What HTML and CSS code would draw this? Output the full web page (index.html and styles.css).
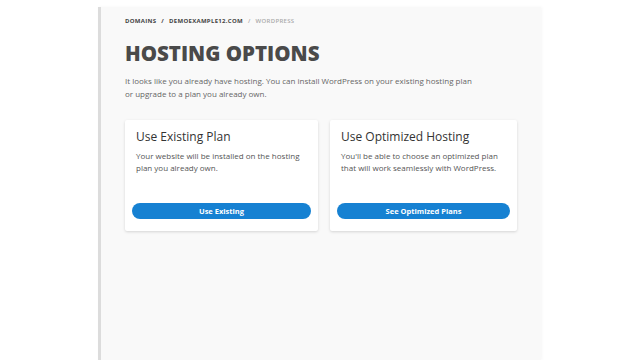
FILE: index.html
```html
<!DOCTYPE html>
<html>
<head>
<meta charset="utf-8">
<link rel="stylesheet" href="styles.css">
</head>
<body>
<div class="page">
  <div class="panel">
    <nav class="crumbs">
      <span class="crumb">DOMAINS</span>
      <span class="sep">/</span>
      <span class="crumb">DEMOEXAMPLE12.COM</span>
      <span class="sep light">/</span>
      <span class="crumb light">WORDPRESS</span>
    </nav>
    <h1 class="title">HOSTING OPTIONS</h1>
    <p class="intro">It looks like you already have hosting. You can install WordPress on your existing hosting plan<br>or upgrade to a plan you already own.</p>
    <div class="cards">
      <div class="card card-a">
        <h2 class="card-title">Use Existing Plan</h2>
        <p class="card-text">Your website will be installed on the hosting<br>plan you already own.</p>
        <button class="btn">Use Existing</button>
      </div>
      <div class="card card-b">
        <h2 class="card-title">Use Optimized Hosting</h2>
        <p class="card-text">You'll be able to choose an optimized plan<br>that will work seamlessly with WordPress.</p>
        <button class="btn">See Optimized Plans</button>
      </div>
    </div>
  </div>
</div>
</body>
</html>
```
FILE: styles.css
```css
html, body {
  margin: 0;
  padding: 0;
  background: #ffffff;
  width: 640px;
  height: 360px;
  overflow: hidden;
  font-family: "Open Sans", "Liberation Sans", sans-serif;
}
.page {
  padding: 7px 0 0 98px;
  height: 353px;
}
.panel {
  width: 443px;
  height: 353px;
  box-sizing: border-box;
  background: #f9f9f9;
  border-left: 3px solid #dcdcdc;
  box-shadow: 1px 0 3px rgba(0,0,0,0.04);
  padding: 9px 0 0 24px;
}
.crumbs {
  display: flex;
  gap: 5px;
  font-size: 6px;
  font-weight: 700;
  letter-spacing: 0.3px;
  color: #444;
  height: 10px;
  align-items: center;
}
.light { color: #aaa; font-weight: 600; }
.title {
  margin: 15px 0 0 0;
  font-family: "Open Sans", sans-serif;
  font-weight: 800;
  font-size: 20.5px;
  line-height: 24px;
  letter-spacing: 0;
  color: #4a4a4a;
}
.intro {
  margin: 9px 0 0 0;
  font-size: 8px;
  line-height: 13px;
  color: #666;
}
.cards {
  display: flex;
  gap: 12px;
  margin-top: 20px;
}
.card {
  background: #fff;
  box-shadow: 0 1px 3px rgba(0,0,0,0.15);
  border-radius: 2px;
  height: 111px;
  box-sizing: border-box;
  padding: 9px 7px 12px 7px;
  display: flex;
  flex-direction: column;
}
.card-a { width: 193px; }
.card-b { width: 187px; }
.card-title {
  margin: 0 0 0 4px;
  font-weight: 400;
  font-size: 12px;
  line-height: 16px;
  color: #333;
}
.card-text {
  margin: 5px 0 0 4px;
  font-size: 8px;
  line-height: 12px;
  color: #555;
}
.btn {
  margin-top: auto;
  height: 16px;
  border: none;
  border-radius: 8px;
  background: #1681d2;
  color: #fff;
  font-family: "Open Sans", sans-serif;
  font-weight: 700;
  font-size: 7.5px;
  padding: 0;
}
```
